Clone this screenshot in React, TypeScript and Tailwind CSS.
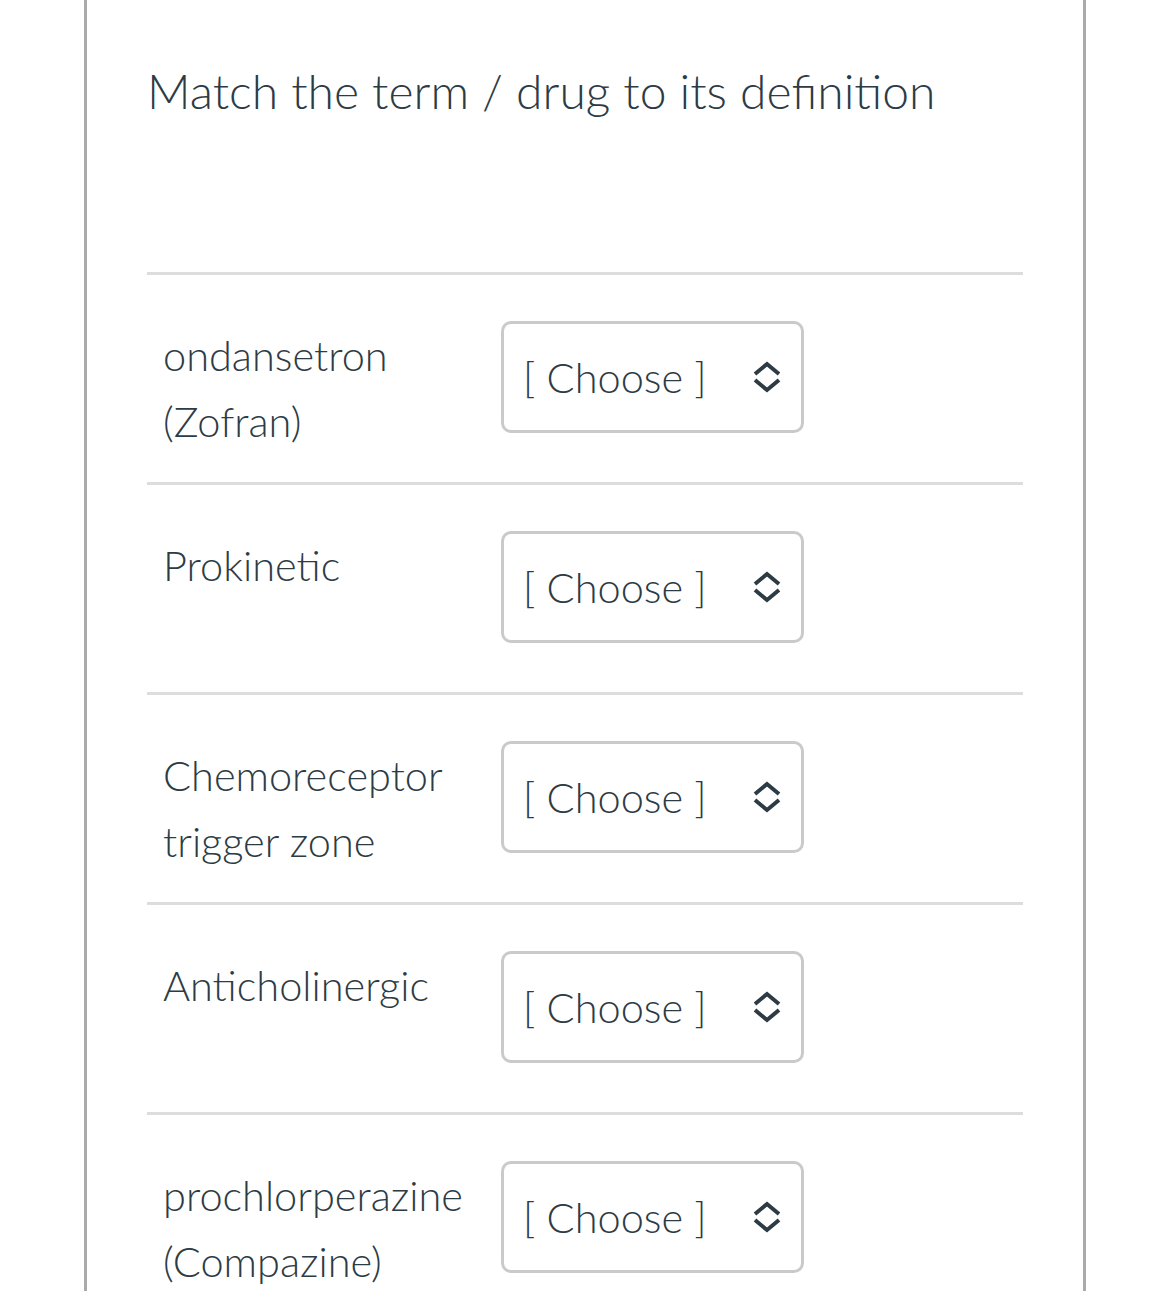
import React from "react";

const rows: string[][] = [
  ["ondansetron", "(Zofran)"],
  ["Prokinetic"],
  ["Chemoreceptor", "trigger zone"],
  ["Anticholinergic"],
  ["prochlorperazine", "(Compazine)"],
];

const Arrows = () => (
  <svg width="28" height="32" viewBox="0 0 28 32" fill="none" stroke="#2d3b45" strokeWidth="4" strokeLinejoin="miter">
    <path d="M2 13 L14 3 L26 13" />
    <path d="M2 19 L14 29 L26 19" />
  </svg>
);

const ChooseBox = () => (
  <div className="flex h-[112px] w-[303px] shrink-0 items-center justify-between rounded-[10px] border-[3px] border-[#cacaca] bg-white pl-[19px] pr-[20px]">
    <span className="text-[41.5px] font-light leading-[50px]">[ Choose ]</span>
    <Arrows />
  </div>
);

export default function App() {
  return (
    <div
      className="h-[1291px] overflow-hidden bg-white text-[#2d3b45]"
      style={{ fontFamily: "Lato, 'Open Sans', sans-serif" }}
    >
      <div className="ml-[84px] h-full w-[1002px] border-x-[3px] border-[#aaaaaa] px-[60px]">
        <h1 className="pt-[62px] text-[48px] font-light leading-[58px]">
          Match the term / drug to its definition
        </h1>

        <div className="mt-[152px]">
          {rows.map((lines, i) => (
            <div key={i} className="flex h-[210px] items-start border-t-[3px] border-[#dddddd] pt-[46px]">
              <div className="w-[354px] shrink-0 pl-[16px] pr-[12px] pt-[1px] text-[41.5px] font-light leading-[66px]">
                {lines.map((l) => (
                  <div key={l}>{l}</div>
                ))}
              </div>
              <ChooseBox />
            </div>
          ))}
        </div>
      </div>
    </div>
  );
}
